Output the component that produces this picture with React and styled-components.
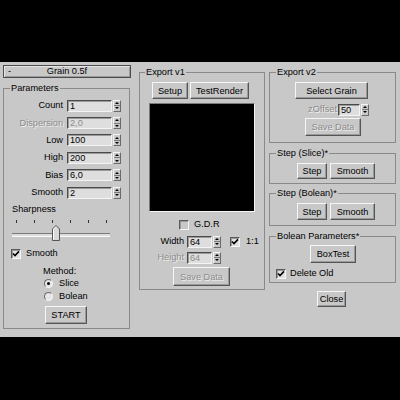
import React from 'react'
import styled, { createGlobalStyle } from 'styled-components'

const GRAY = '#c8c8c8'
const LINE = '#8a8a8a'
const DIS = '#8c8c8c'
const FS = '9.2px'

const Global = createGlobalStyle`
  html, body { margin:0; padding:0; background:#000; }
  body {
    font-family: "Liberation Sans", Arial, sans-serif;
    font-size:${FS};
    color:#000;
  }
`;

const Screen = styled.div`
  width:400px;
  height:400px;
  background:#000;
  padding-top:62px;
  box-sizing:border-box;
`;

const Window = styled.div`
  height:275px;
  background:${GRAY};
  display:flex;
  align-items:flex-start;
  padding:3px 3px 0 3px;
  box-sizing:border-box;
`;

const Column = styled.div`
  display:flex;
  flex-direction:column;
  width:${p => p.w}px;
  margin-left:${p => p.ml || 0}px;
`;

const RollHeader = styled.div`
  height:13px;
  box-sizing:border-box;
  border:1px solid #4c4c4c;
  box-shadow: inset 1px 1px 0 #e6e6e6, inset -1px -1px 0 #9a9a9a;
  display:grid;
  grid-template-columns:14px 1fr 14px;
  align-items:center;
  line-height:11px;
  font-size:${FS};

  & > span:first-child { padding-left:4px; }
  & > span:nth-child(2) { text-align:center; }
`;

const Group = styled.fieldset`
  margin:${p => p.mt || 0}px 0 0 0;
  padding:0;
  min-width:0;
  box-sizing:border-box;
  width:${p => p.w}px;
  height:${p => p.h}px;
  border:1px solid ${LINE};
  display:flex;
  flex-direction:column;
  align-items:flex-start;
`;

const Legend = styled.legend`
  padding:0 1px;
  margin-left:${p => p.ml || 6}px;
  line-height:11px;
  font-size:${FS};
`;

const ParamGrid = styled.div`
  display:grid;
  grid-template-columns:${p => p.cols};
  grid-auto-rows:${p => p.rh}px;
  column-gap:${p => p.gap || 4}px;
  align-items:center;
  margin-top:${p => p.mt || 0}px;
  margin-left:${p => p.ml || 0}px;
`;

const Label = styled.span`
  text-align:right;
  line-height:11px;
  white-space:nowrap;
  color:${p => (p.disabled ? DIS : '#000')};
  text-shadow:${p => (p.disabled ? '1px 1px 0 #efefef' : 'none')};
`;

const SpinWrap = styled.div`
  display:flex;
  align-items:center;
  gap:1px;
`;

const Field = styled.div`
  width:${p => p.w}px;
  height:12px;
  box-sizing:border-box;
  border:1px solid;
  border-color:#4a4a4a #f4f4f4 #f4f4f4 #4a4a4a;
  box-shadow: inset 1px 1px 0 #9a9a9a;
  background:#dedede;
  padding-left:2px;
  line-height:11px;
  font-size:${FS};
  color:${p => (p.disabled ? DIS : '#000')};
  overflow:hidden;
`;

const Arrows = styled.div`
  width:8px;
  height:12px;
  display:flex;
  flex-direction:column;
  box-sizing:border-box;
  border:1px solid;
  border-color:#f4f4f4 #6a6a6a #6a6a6a #f4f4f4;
  background:${GRAY};
`;

const ArrowHalf = styled.div`
  flex:1;
  display:flex;
  align-items:center;
  justify-content:center;
  border-top:${p => (p.down ? '1px solid #7a7a7a' : 'none')};

  &::after {
    content:'';
    border-left:2px solid transparent;
    border-right:2px solid transparent;
    ${p => (p.down ? 'border-top:2px solid #000;' : 'border-bottom:2px solid #000;')}
  }
`;

const Spinner = ({ value, w, disabled }) => (
  <SpinWrap>
    <Field w={w} disabled={disabled}>{value}</Field>
    <Arrows>
      <ArrowHalf />
      <ArrowHalf down />
    </Arrows>
  </SpinWrap>
);

const Button = styled.div`
  width:${p => p.w}px;
  height:${p => p.h || 17}px;
  box-sizing:border-box;
  border:1px solid;
  border-color:#f6f6f6 #555 #555 #f6f6f6;
  box-shadow: inset -1px -1px 0 #9a9a9a;
  background:${GRAY};
  display:flex;
  align-items:center;
  justify-content:center;
  font-size:${FS};
  white-space:nowrap;
  margin-top:${p => p.mt || 0}px;
  margin-left:${p => p.ml || 0}px;
  color:${p => (p.disabled ? DIS : '#000')};
  text-shadow:${p => (p.disabled ? '1px 1px 0 #efefef' : 'none')};
`;

const ButtonRow = styled.div`
  display:flex;
  gap:${p => p.gap || 2}px;
  margin-top:${p => p.mt || 0}px;
  margin-left:${p => p.ml || 0}px;
`;

const Caption = styled.div`
  line-height:11px;
  margin-top:${p => p.mt || 0}px;
  margin-left:${p => p.ml || 0}px;
`;

const Slider = styled.div`
  position:relative;
  width:98px;
  height:25px;
  margin-top:2px;
  margin-left:8px;
`;

const Ticks = styled.div`
  display:flex;
  justify-content:space-between;
  padding:3px 3px 0 4px;

  & > i {
    display:block;
    width:1px;
    height:3px;
    background:#333;
  }
`;

const Track = styled.div`
  margin-top:10px;
  height:2px;
  border-top:1px solid #7a7a7a;
  border-bottom:1px solid #fafafa;
  background:#ddd;
`;

const Thumb = styled.svg`
  position:absolute;
  left:40px;
  top:8px;
`;

const CheckRow = styled.label`
  display:flex;
  align-items:center;
  gap:${p => p.gap || 5}px;
  margin-top:${p => p.mt || 0}px;
  margin-left:${p => p.ml || 0}px;
  line-height:11px;
`;

const Box = styled.span`
  width:10px;
  height:10px;
  box-sizing:border-box;
  border:1px solid;
  border-color:#5a5a5a #f6f6f6 #f6f6f6 #5a5a5a;
  box-shadow: inset 1px 1px 0 #9a9a9a;
  background:${p => (p.disabled ? GRAY : '#e2e2e2')};
  display:flex;
  align-items:center;
  justify-content:center;
`;

const Check = ({ checked, disabled }) => (
  <Box disabled={disabled}>
    {checked && (
      <svg width="8" height="8" viewBox="0 0 8 8">
        <path d="M1 3.5 L3 5.6 L7 1.4" fill="none" stroke="#000" strokeWidth="1.6" />
      </svg>
    )}
  </Box>
);

const RadioRow = styled.div`
  height:13px;
  display:flex;
  align-items:center;
  gap:6px;
  margin-left:${p => p.ml || 0}px;
  line-height:11px;
`;

const RadioDot = styled.span`
  width:9px;
  height:9px;
  border-radius:50%;
  box-sizing:border-box;
  border:1px solid;
  border-color:#6a6a6a #f4f4f4 #f4f4f4 #6a6a6a;
  background:#e6e6e6;
  display:flex;
  align-items:center;
  justify-content:center;

  &::after {
    content:'';
    width:3px;
    height:3px;
    border-radius:50%;
    background:${p => (p.on ? '#000' : 'transparent')};
  }
`;

const Canvas = styled.div`
  width:106px;
  height:109px;
  box-sizing:border-box;
  background:#000;
  border:1px solid;
  border-color:#7a7a7a #f4f4f4 #f4f4f4 #7a7a7a;
  margin-top:4px;
  margin-left:9px;
`;

const SizeRow = styled.div`
  display:flex;
  align-items:center;
  margin-left:${p => p.ml || 0}px;
  margin-top:${p => p.mt || 0}px;
  height:13px;
`;

const params = [
  ['Count', '1'],
  ['Dispersion', '2,0', true],
  ['Low', '100'],
  ['High', '200'],
  ['Bias', '6,0'],
  ['Smooth', '2'],
];

export default function App() {
  return (
    <>
      <Global />
      <Screen>
        <Window>
          <Column w={128}>
            <RollHeader>
              <span>-</span>
              <span>Grain 0.5f</span>
              <span />
            </RollHeader>
            <Group w={127} h={246} mt={5}>
              <Legend ml={6}>Parameters</Legend>
              <ParamGrid cols="59px auto" rh={17.4} mt={3}>
                {params.map(([name, val, dis]) => (
                  <React.Fragment key={name}>
                    <Label disabled={dis}>{name}</Label>
                    <Spinner value={val} w={45} disabled={dis} />
                  </React.Fragment>
                ))}
              </ParamGrid>
              <Caption mt={3} ml={8}>Sharpness</Caption>
              <Slider>
                <Ticks>
                  <i /><i /><i /><i /><i /><i />
                </Ticks>
                <Track />
                <Thumb width="8" height="16" viewBox="0 0 8 16">
                  <path d="M0.5 15.5 V4 L4 0.5 L7.5 4 V15.5 Z" fill="#d8d8d8" stroke="#555" />
                  <path d="M1.5 14.5 V4.4 L4 1.8" fill="none" stroke="#fff" />
                </Thumb>
              </Slider>
              <CheckRow mt={6} ml={7}>
                <Check checked />
                Smooth
              </CheckRow>
              <Caption mt={7} ml={39}>Method:</Caption>
              <RadioRow ml={40}><RadioDot on />Slice</RadioRow>
              <RadioRow ml={40}><RadioDot />Bolean</RadioRow>
              <Button w={42} h={18} mt={3} ml={41}>START</Button>
            </Group>
          </Column>

          <Column w={126} ml={8}>
            <Group w={126} h={223.5} mt={1.5}>
              <Legend ml={5}>Export v1</Legend>
              <ButtonRow mt={4.5} ml={12}>
                <Button w={36}>Setup</Button>
                <Button w={59}>TestRender</Button>
              </ButtonRow>
              <Canvas />
              <CheckRow mt={7} ml={39}>
                <Check disabled />
                G.D.R
              </CheckRow>
              <SizeRow mt={5} ml={2}>
                <ParamGrid cols="42px auto" rh={13} gap={3}>
                  <Label>Width</Label>
                  <Spinner value="64" w={25} />
                </ParamGrid>
                <CheckRow ml={9} gap={6}>
                  <Check checked />
                  1:1
                </CheckRow>
              </SizeRow>
              <SizeRow mt={3} ml={2}>
                <ParamGrid cols="42px auto" rh={13} gap={3}>
                  <Label disabled>Height</Label>
                  <Spinner value="64" w={25} disabled />
                </ParamGrid>
              </SizeRow>
              <Button w={57} h={19} mt={3} ml={33} disabled>Save Data</Button>
            </Group>
          </Column>

          <Column w={127} ml={4}>
            <Group w={127} h={76.5} mt={1.5}>
              <Legend ml={6}>Export v2</Legend>
              <Button w={73} h={17} mt={4.5} ml={25}>Select Grain</Button>
              <ParamGrid cols="67px auto" rh={13} gap={1} mt={4}>
                <Label disabled>zOffset</Label>
                <Spinner value="50" w={22} />
              </ParamGrid>
              <Button w={56} h={18} mt={2} ml={35} disabled>Save Data</Button>
            </Group>
            <Group w={127} h={36.5} mt={4.5}>
              <Legend ml={6}>Step (Slice)*</Legend>
              <ButtonRow mt={4.5} ml={27} gap={3}>
                <Button w={30} h={16}>Step</Button>
                <Button w={45} h={16}>Smooth</Button>
              </ButtonRow>
            </Group>
            <Group w={127} h={38.5} mt={3.5}>
              <Legend ml={6}>Step (Bolean)*</Legend>
              <ButtonRow mt={4.5} ml={27} gap={3}>
                <Button w={30} h={17}>Step</Button>
                <Button w={45} h={17}>Smooth</Button>
              </ButtonRow>
            </Group>
            <Group w={127} h={52.5} mt={4.5}>
              <Legend ml={6}>Bolean Parameters*</Legend>
              <Button w={46} h={18} mt={3.5} ml={40}>BoxTest</Button>
              <CheckRow mt={5} ml={6} gap={4}>
                <Check checked />
                Delete Old
              </CheckRow>
            </Group>
            <Button w={29} h={16} mt={8} ml={48}>Close</Button>
          </Column>
        </Window>
      </Screen>
    </>
  )
}
